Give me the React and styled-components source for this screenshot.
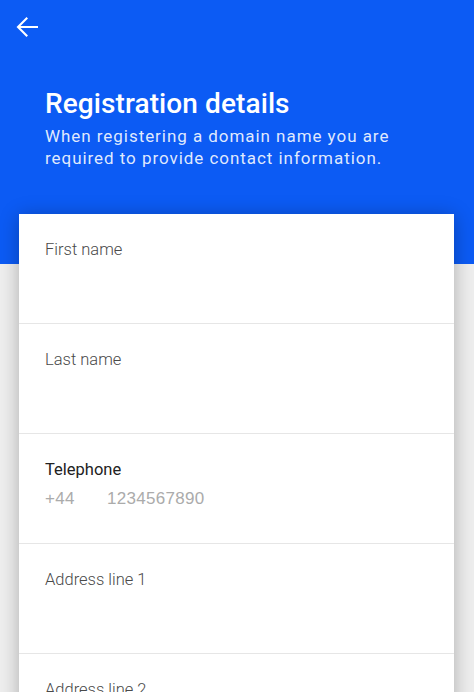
import React from "react";
import styled, { createGlobalStyle } from "styled-components";

const Global = createGlobalStyle`
  html, body {
    margin: 0;
    padding: 0;
    background: #eeeeee;
    font-family: Roboto, "Liberation Sans", sans-serif;
  }
`;

const Page = styled.div`
  position: relative;
  width: 474px;
  height: 692px;
  overflow: hidden;
  background: #eeeeee;
`;

const Header = styled.header`
  height: 264px;
  background: #0c5bf4;
  color: #fff;
  box-sizing: border-box;
`;

const TopBar = styled.div`
  height: 54px;
  display: flex;
  align-items: center;
  padding-left: 15px;
`;

const BackButton = styled.button`
  border: none;
  background: none;
  padding: 0;
  width: 24px;
  height: 24px;
  display: flex;
  align-items: center;
  justify-content: center;
  cursor: pointer;
`;

const Intro = styled.div`
  padding: 33px 45px 0;
`;

const Title = styled.h1`
  margin: 0;
  font-size: 28px;
  line-height: 34px;
  font-weight: 500;
  letter-spacing: 0.1px;
`;

const Subtitle = styled.p`
  margin: 4px 0 0;
  font-size: 17px;
  line-height: 22px;
  letter-spacing: 0.95px;
  color: rgba(255, 255, 255, 0.88);
`;

const Card = styled.div`
  position: relative;
  margin: -50px 20px 0 19px;
  background: #fff;
  box-shadow: 0 2px 18px rgba(0, 0, 0, 0.28);
`;

const Field = styled.div`
  height: 110px;
  box-sizing: border-box;
  padding: 26px 26px 0;
  border-bottom: 1px solid #e6e6e6;
`;

const Label = styled.div`
  font-size: 16.5px;
  line-height: 20px;
  font-weight: ${(p) => (p.$active ? 400 : 300)};
  color: ${(p) => (p.$active ? "#222222" : "#4a4a4a")};
`;

const InputRow = styled.div`
  display: flex;
  margin-top: 9px;
  font-family: "Liberation Sans", Arial, sans-serif;
  font-size: 17px;
  line-height: 20px;
  color: #ababab;
  letter-spacing: 0.3px;
`;

const Prefix = styled.span`
  width: 62px;
`;

const ArrowBack = () => (
  <svg width="22" height="20" viewBox="0 0 22 20" fill="none">
    <path
      d="M21 10H2.5M10.5 1.5L2 10l8.5 8.5"
      stroke="#fff"
      strokeWidth="2.1"
      strokeLinecap="square"
    />
  </svg>
);

const fields = [
  { label: "First name" },
  { label: "Last name" },
  { label: "Telephone", active: true, prefix: "+44", value: "1234567890" },
  { label: "Address line 1" },
  { label: "Address line 2" },
];

export default function App() {
  return (
    <>
      <Global />
      <Page>
        <Header>
          <TopBar>
            <BackButton aria-label="Back">
              <ArrowBack />
            </BackButton>
          </TopBar>
          <Intro>
            <Title>Registration details</Title>
            <Subtitle>
              When registering a domain name you are
              <br />
              required to provide contact information.
            </Subtitle>
          </Intro>
        </Header>
        <Card>
          {fields.map((f) => (
            <Field key={f.label}>
              <Label $active={f.active}>{f.label}</Label>
              {f.prefix && (
                <InputRow>
                  <Prefix>{f.prefix}</Prefix>
                  <span>{f.value}</span>
                </InputRow>
              )}
            </Field>
          ))}
        </Card>
      </Page>
    </>
  );
}
